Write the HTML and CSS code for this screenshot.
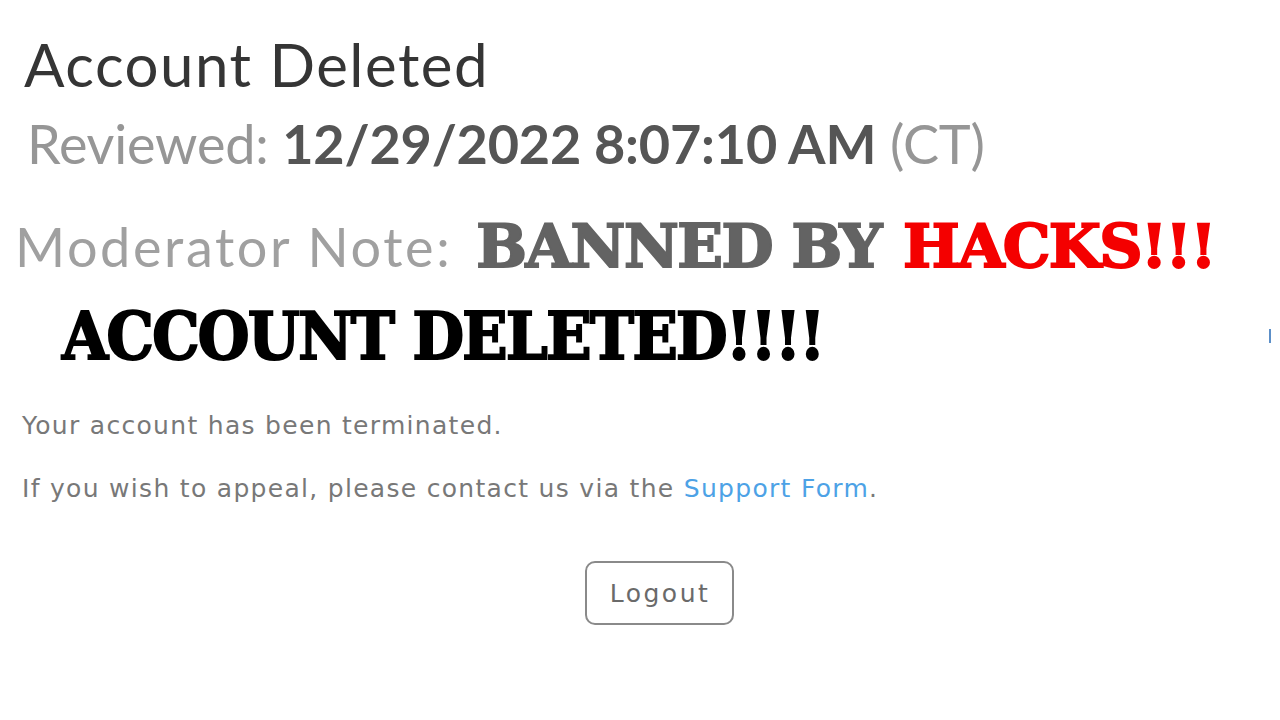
FILE: index.html
```html
<!DOCTYPE html>
<html>
<head>
<meta charset="utf-8">
<link rel="stylesheet" href="styles.css">
</head>
<body>
<main class="page">
  <h1 class="title">Account Deleted</h1>
  <div class="reviewed">Reviewed: <strong>12/29/2022 8:07:10 AM</strong> (CT)</div>
  <div class="note-row">
    <span class="note-label">Moderator Note:</span>
    <span class="shout shout-gray">BANNED BY</span>
    <span class="shout shout-red">HACKS!!!</span>
  </div>
  <div class="deleted-row">
    <span class="shout shout-black">ACCOUNT DELETED!!!!</span>
    <span class="caret"></span>
  </div>
  <p class="msg msg-first">Your account has been terminated.</p>
  <p class="msg msg-second">If you wish to appeal, please contact us via the <a class="link" href="#">Support Form</a>.</p>
  <div class="actions">
    <button class="logout">Logout</button>
  </div>
</main>
</body>
</html>
```

FILE: styles.css
```css
html, body {
  margin: 0;
  padding: 0;
  background: #ffffff;
}

.page {
  width: 1280px;
  height: 720px;
  box-sizing: border-box;
  padding-top: 29px;
  font-family: Lato, "Open Sans", sans-serif;
}

.title {
  margin: 0 0 0 24px;
  font-size: 60px;
  line-height: 70px;
  font-weight: 400;
  color: #353535;
  letter-spacing: 1.5px;
}

.reviewed {
  margin: 15px 0 0 27px;
  font-size: 54px;
  line-height: 60px;
  color: #969696;
  letter-spacing: -0.2px;
}

.reviewed strong {
  color: #555555;
  font-weight: 700;
}

.note-row {
  margin: 42px 0 0 15px;
  display: flex;
  align-items: baseline;
  height: 60px;
  line-height: 60px;
}

.note-label {
  font-size: 54px;
  color: #a0a0a0;
  letter-spacing: 2.6px;
  margin-right: 24px;
}

.shout {
  font-family: "DejaVu Serif", "Liberation Serif", serif;
  font-weight: 700;
  -webkit-text-stroke: 2px currentColor;
}

.shout-gray {
  font-size: 60px;
  color: #636363;
  margin-right: 22px;
  letter-spacing: -1.5px;
}

.shout-red {
  font-size: 60px;
  color: #f40000;
  letter-spacing: -1.7px;
}

.deleted-row {
  margin: 28px 0 0 62px;
  display: flex;
  align-items: center;
  height: 64px;
  line-height: 64px;
}

.shout-black {
  font-family: "DejaVu Serif Condensed", "DejaVu Serif", serif;
  font-stretch: condensed;
  font-size: 66px;
  color: #000000;
  letter-spacing: -1.6px;
}

.caret {
  margin-left: auto;
  margin-right: 9px;
  width: 2px;
  height: 14px;
  background: #5c8fc8;
}

.msg {
  margin: 0 0 0 22px;
  font-family: "DejaVu Sans", Verdana, sans-serif;
  font-size: 25px;
  line-height: 30px;
  color: #787878;
  letter-spacing: 1.3px;
}

.msg-first {
  margin-top: 43px;
}

.msg-second {
  margin-top: 33px;
}

.link {
  color: #4da2e6;
  text-decoration: none;
}

.actions {
  display: flex;
  justify-content: center;
  padding-left: 38px;
  margin-top: 57px;
}

.logout {
  width: 149px;
  height: 64px;
  border: 2px solid #8a8a8a;
  border-radius: 10px;
  background: #ffffff;
  font-family: "DejaVu Sans", Verdana, sans-serif;
  font-size: 25px;
  font-weight: 400;
  color: #6a6a6a;
  letter-spacing: 2.5px;
  text-indent: 2px;
}
```
